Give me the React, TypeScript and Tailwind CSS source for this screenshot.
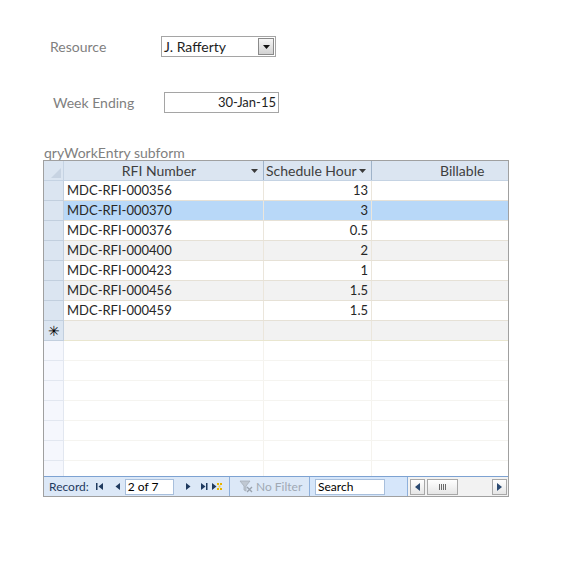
import React from 'react'

const ROWS = [
  { rfi: 'MDC-RFI-000356', hrs: '13' },
  { rfi: 'MDC-RFI-000370', hrs: '3' },
  { rfi: 'MDC-RFI-000376', hrs: '0.5' },
  { rfi: 'MDC-RFI-000400', hrs: '2' },
  { rfi: 'MDC-RFI-000423', hrs: '1' },
  { rfi: 'MDC-RFI-000456', hrs: '1.5' },
  { rfi: 'MDC-RFI-000459', hrs: '1.5' },
]

const SELECTED = 1

function SortArrow() {
  return (
    <svg width="7" height="4" viewBox="0 0 7 4" className="shrink-0">
      <path d="M0 0h7L3.5 4z" fill="#3b3b3b" />
    </svg>
  )
}

function NavIcon({ kind }: { kind: 'first' | 'prev' | 'next' | 'last' | 'new' }) {
  const c = '#1f3a5f'
  return (
    <svg width="12" height="9" viewBox="0 0 12 9" className="shrink-0">
      {kind === 'first' && (<><rect x="2" y="1" width="1.5" height="7" fill={c} /><path d="M9 1v7L4.5 4.5z" fill={c} /></>)}
      {kind === 'prev' && <path d="M8 1v7L3.5 4.5z" fill={c} />}
      {kind === 'next' && <path d="M4 1v7l4.5-3.5z" fill={c} />}
      {kind === 'last' && (<><path d="M3 1v7l4.5-3.5z" fill={c} /><rect x="8" y="1" width="1.5" height="7" fill={c} /></>)}
      {kind === 'new' && (
        <>
          <path d="M1 1v7l4.5-3.5z" fill={c} />
          <g fill="#e8b400">
            <rect x="6" y="1" width="2" height="2" />
            <rect x="9" y="1" width="2" height="2" />
            <rect x="6" y="6" width="2" height="2" />
            <rect x="9" y="6" width="2" height="2" />
            <rect x="7.5" y="3.5" width="2" height="2" fill="#f7d24a" />
          </g>
        </>
      )}
    </svg>
  )
}

export default function App() {
  return (
    <div className="w-[567px] h-[574px] bg-white text-[13px] text-[#262626]" style={{ fontFamily: 'Lato, "Open Sans", sans-serif' }}>
      <div className="flex items-center pt-[36px] text-[14px]">
        <div className="ml-[50px] w-[111px] text-[#7f7f7f]">Resource</div>
        <div className="w-[115px] h-[21px] border border-[#a5a5a5] flex items-center pl-[2px] pr-[1px] text-[#1e1e1e]">
          <span className="flex-1 leading-none">J. Rafferty</span>
          <div className="w-[16px] h-[17px] border border-[#8a8a8a] bg-gradient-to-b from-[#f6f6f6] to-[#d2d2d2] flex items-center justify-center">
            <svg width="7" height="4" viewBox="0 0 7 4"><path d="M0 0h7L3.5 4z" fill="#111" /></svg>
          </div>
        </div>
      </div>

      <div className="flex items-center mt-[35px]">
        <div className="ml-[53px] w-[111px] text-[14px] text-[#7f7f7f]">Week Ending</div>
        <div className="w-[115px] h-[21px] border border-[#a5a5a5] flex items-center justify-end pr-[2px] text-[#1e1e1e]">
          30-Jan-15
        </div>
      </div>

      <div className="ml-[44px] mt-[32px] h-[15px] leading-[15px] text-[14px] text-[#7f7f7f]">qryWorkEntry subform</div>

      <div className="ml-[43px] w-[466px] h-[337px] border border-[#a0a0a0] flex flex-col overflow-hidden">
        {/* header */}
        <div className="flex h-[20px] shrink-0 bg-[#dbe5f1] border-b border-[#c5d3e3] text-[14px] text-[#3e3e3e]">
          <div className="w-[20px] shrink-0 border-r border-[#c5d3e3] relative">
            <svg width="10" height="10" viewBox="0 0 10 10" className="absolute right-[2px] bottom-[2px]">
              <path d="M10 0v10H0z" fill="#c7d3e2" />
            </svg>
          </div>
          <div className="w-[200px] shrink-0 border-r border-[#9fb3c9] flex items-center pl-[3px] pr-[5px]">
            <span className="flex-1 text-center">RFI Number</span>
            <SortArrow />
          </div>
          <div className="w-[108px] shrink-0 border-r border-[#9fb3c9] flex items-center pl-[2px] pr-[5px] overflow-hidden">
            <span className="flex-1 whitespace-nowrap overflow-hidden">Schedule Hours</span>
            <span className="ml-[2px]"><SortArrow /></span>
          </div>
          <div className="flex-1 flex items-center pl-[68px]">Billable</div>
        </div>

        {/* data rows */}
        {ROWS.map((r, i) => {
          const bg = i === SELECTED ? 'bg-[#b8d8f8]' : i % 2 === 1 ? 'bg-[#f2f2f2]' : 'bg-white'
          return (
            <div key={r.rfi} className="flex h-[20px] shrink-0">
              <div className="w-[20px] shrink-0 bg-[#dbe5f1] border-r border-b border-[#c2cfde]" />
              <div className={`flex flex-1 border-b border-[#e6e1d6] ${bg}`}>
                <div className="w-[200px] shrink-0 border-r border-[#ebe6dc] pl-[3px] flex items-center">{r.rfi}</div>
                <div className="w-[108px] shrink-0 border-r border-[#ebe6dc] pr-[3px] flex items-center justify-end">{r.hrs}</div>
                <div className="flex-1" />
              </div>
            </div>
          )
        })}

        {/* new record row */}
        <div className="flex h-[20px] shrink-0">
          <div className="w-[20px] shrink-0 bg-[#dbe5f1] border-r border-b border-[#c2cfde] flex items-center justify-center">
            <span className="text-[14px] leading-none text-black">✳</span>
          </div>
          <div className="flex flex-1 bg-[#f2f2f2] border-b border-[#e9e6cf]">
            <div className="w-[200px] shrink-0 border-r border-[#ebe6dc]" />
            <div className="w-[108px] shrink-0 border-r border-[#ebe6dc]" />
            <div className="flex-1" />
          </div>
        </div>

        {/* empty area */}
        <div className="flex-1 overflow-hidden">
          {Array.from({ length: 7 }).map((_, i) => (
            <div key={i} className="flex h-[20px]">
              <div className="w-[20px] shrink-0 bg-[#f5f7fd] border-r border-b border-[#e2e7f0]" />
              <div className="flex flex-1 border-b border-[#f5f4f0]">
                <div className="w-[200px] shrink-0 border-r border-[#f5f3ee]" />
                <div className="w-[108px] shrink-0 border-r border-[#f5f3ee]" />
                <div className="flex-1" />
              </div>
            </div>
          ))}
        </div>

        {/* navigation bar */}
        <div className="h-[20px] shrink-0 flex border-t border-[#7da2d2] bg-[#dce8f7] text-[12px] text-[#1f3a5f]">
          <div className="flex items-center pl-[5px] w-[186px] border-r border-[#8eb0db]">
            <span className="mr-[5px]">Record:</span>
            <NavIcon kind="first" />
            <span className="w-[6px]" />
            <NavIcon kind="prev" />
            <div className="ml-[1px] w-[49px] h-[16px] bg-white border border-[#a8bfdc] pl-[2px] flex items-center text-black">2 of 7</div>
            <span className="w-[8px]" />
            <NavIcon kind="next" />
            <span className="w-[4px]" />
            <NavIcon kind="last" />
            <span className="w-[1px]" />
            <NavIcon kind="new" />
          </div>
          <div className="flex items-center w-[80px] border-r border-[#8eb0db] pl-[9px] text-[#a0a8b4]">
            <svg width="14" height="13" viewBox="0 0 14 13" className="mr-[3px]">
              <path d="M1 1h10L7 6v5l-2-1V6z" fill="#c0c8d2" stroke="#a5adb8" strokeWidth="0.8" />
              <path d="M8 7l5 5M13 7l-5 5" stroke="#9aa3ae" strokeWidth="1.4" />
            </svg>
            No Filter
          </div>
          <div className="flex items-center pl-[5px] w-[98px] border-r border-[#8eb0db] bg-[#d6e6fa]">
            <div className="w-[70px] h-[16px] bg-white border border-[#a8bfdc] pl-[2px] flex items-center text-black">Search</div>
          </div>
          <div className="flex-1 bg-[#f2f2f2] flex items-center pl-[2px] pr-[1px]">
            <div className="w-[15px] h-[16px] border border-[#a8a8a8] bg-gradient-to-b from-white to-[#e6e6e6] flex items-center justify-center">
              <svg width="5" height="8" viewBox="0 0 5 8"><path d="M5 0v8L0 4z" fill="#2b4a72" /></svg>
            </div>
            <div className="ml-[2px] w-[31px] h-[16px] border border-[#a8a8a8] bg-gradient-to-b from-white to-[#e6e6e6] flex items-center justify-center gap-[1px]">
              <span className="w-[1px] h-[6px] bg-[#6b6b6b]" />
              <span className="w-[1px] h-[6px] bg-[#6b6b6b]" />
              <span className="w-[1px] h-[6px] bg-[#6b6b6b]" />
              <span className="w-[1px] h-[6px] bg-[#6b6b6b]" />
            </div>
            <div className="flex-1" />
            <div className="w-[15px] h-[16px] border border-[#a8a8a8] bg-gradient-to-b from-white to-[#e6e6e6] flex items-center justify-center">
              <svg width="5" height="8" viewBox="0 0 5 8"><path d="M0 0v8l5-4z" fill="#2b4a72" /></svg>
            </div>
          </div>
        </div>
      </div>
    </div>
  )
}
